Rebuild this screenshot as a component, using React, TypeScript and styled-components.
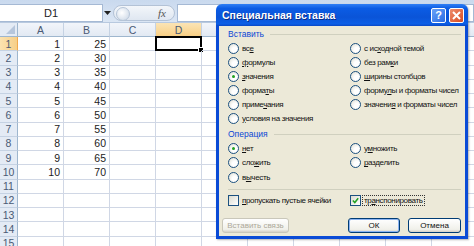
import { Fragment } from "react";
import styled, { createGlobalStyle } from "styled-components";

const GlobalStyle = createGlobalStyle`
  html, body {
    margin: 0;
    padding: 0;
    background: #ffffff;
  }
  body {
    width: 474px;
    height: 246px;
    overflow: hidden;
    font-family: "Liberation Sans", Arial, sans-serif;
  }
`;

const columns = ["A", "B", "C", "D", "E", "F", "G", "H", "I", "J"];
const rowCount = 15;

const values: Record<number, [number, number]> = {
  1: [1, 25],
  2: [2, 30],
  3: [3, 35],
  4: [4, 40],
  5: [5, 45],
  6: [6, 50],
  7: [7, 55],
  8: [8, 60],
  9: [9, 65],
  10: [10, 70],
};

interface RadioItem {
  before: string;
  key: string;
  after: string;
  checked?: boolean;
}

const pasteLeft: RadioItem[] = [
  { before: "вс", key: "е", after: "" },
  { before: "", key: "ф", after: "ормулы" },
  { before: "", key: "з", after: "начения", checked: true },
  { before: "форма", key: "т", after: "ы" },
  { before: "приме", key: "ч", after: "ания" },
  { before: "", key: "у", after: "словия на значения" },
];

const pasteRight: RadioItem[] = [
  { before: "с ис", key: "х", after: "одной темой" },
  { before: "без рам", key: "к", after: "и" },
  { before: "", key: "ш", after: "ирины столбцов" },
  { before: "форму", key: "л", after: "ы и форматы чисел" },
  { before: "значени", key: "я", after: " и форматы чисел" },
];

const opLeft: RadioItem[] = [
  { before: "", key: "н", after: "ет", checked: true },
  { before: "сло", key: "ж", after: "ить" },
  { before: "в", key: "ы", after: "честь" },
];

const opRight: RadioItem[] = [
  { before: "у", key: "м", after: "ножить" },
  { before: "", key: "р", after: "азделить" },
];

function App() {
  return (
    <>
      <GlobalStyle />
      <Page>
        <FormulaBar>
          <NameBox>D1</NameBox>
          <NameArrow>
            <svg width="7" height="4" viewBox="0 0 7 4">
              <path d="M0 0 H7 L3.5 4 Z" fill="#222" />
            </svg>
          </NameArrow>
          <FxPill>
            <PillKnob />
            <FxLabel>fx</FxLabel>
          </FxPill>
          <FormulaInput />
        </FormulaBar>

        <Sheet>
          <Corner>
            <svg width="9" height="9" viewBox="0 0 9 9">
              <path d="M9 0 V9 H0 Z" fill="#b6c6dc" />
            </svg>
          </Corner>
          {columns.map(c => (
            <ColHead key={c} $active={c === "D"}>
              {c}
            </ColHead>
          ))}
          {Array.from({ length: rowCount }, (_, i) => i + 1).map(r => (
            <Fragment key={r}>
              <RowHead $active={r === 1}>{r}</RowHead>
              {columns.map(c => {
                const v = values[r];
                let text = "";
                if (v && c === "A") text = String(v[0]);
                if (v && c === "B") text = String(v[1]);
                return (
                  <Cell key={c}>
                    {text}
                    {r === 1 && c === "D" && (
                      <Selection>
                        <Handle />
                      </Selection>
                    )}
                  </Cell>
                );
              })}
            </Fragment>
          ))}
        </Sheet>

        <Dialog>
          <TitleBar>
            <Title>Специальная вставка</Title>
            <TitleButtons>
              <TitleBtn $kind="help">?</TitleBtn>
              <TitleBtn $kind="close">
                <svg width="9" height="9" viewBox="0 0 9 9">
                  <path d="M1 1 L8 8 M8 1 L1 8" stroke="#fff" strokeWidth="2" />
                </svg>
              </TitleBtn>
            </TitleButtons>
          </TitleBar>
          <Body>
            <GroupHead>
              <GroupLabel>Вставить</GroupLabel>
              <GroupLine />
            </GroupHead>
            <Options>
              <Column>
                {pasteLeft.map(o => (
                  <Radio key={o.before + o.key} item={o} />
                ))}
              </Column>
              <Column>
                {pasteRight.map(o => (
                  <Radio key={o.before + o.key} item={o} />
                ))}
              </Column>
            </Options>

            <GroupHead $top={2}>
              <GroupLabel>Операция</GroupLabel>
              <GroupLine />
            </GroupHead>
            <Options $rowHeight={14.5}>
              <Column>
                {opLeft.map(o => (
                  <Radio key={o.before + o.key} item={o} />
                ))}
              </Column>
              <Column>
                {opRight.map(o => (
                  <Radio key={o.before + o.key} item={o} />
                ))}
              </Column>
            </Options>

            <Separator />

            <Options>
              <Column>
                <OptionRow>
                  <CheckBox />
                  <OptionText>
                    <u>п</u>ропускать пустые ячейки
                  </OptionText>
                </OptionRow>
              </Column>
              <Column>
                <OptionRow>
                  <CheckBox $checked>
                    <svg width="7" height="7" viewBox="0 0 7 7">
                      <path d="M0.8 3.5 L2.8 5.5 L6.2 1.2" stroke="#21a121" strokeWidth="1.5" fill="none" />
                    </svg>
                  </CheckBox>
                  <OptionText $focused>
                    тр<u>а</u>нспонировать
                  </OptionText>
                </OptionRow>
              </Column>
            </Options>

            <ButtonRow>
              <Button $disabled $width={67}>
                Вставить связь
              </Button>
              <ButtonGroup>
                <Button $default $width={52}>
                  ОК
                </Button>
                <Button $width={53}>Отмена</Button>
              </ButtonGroup>
            </ButtonRow>
          </Body>
        </Dialog>
      </Page>
    </>
  );
}

function Radio({ item }: { item: RadioItem }) {
  return (
    <OptionRow>
      <RadioCircle $checked={item.checked} />
      <OptionText>
        {item.before}
        <u>{item.key}</u>
        {item.after}
      </OptionText>
    </OptionRow>
  );
}

export default App;

const Page = styled.div`
  position: relative;
  width: 474px;
  height: 246px;
  overflow: hidden;
  background: #ffffff;
`;

const FormulaBar = styled.div`
  display: flex;
  align-items: stretch;
  height: 18px;
  padding-top: 4px;
  background: linear-gradient(#c9d9ee, #dbe6f4);
  border-bottom: 1px solid #b8c9df;
`;

const NameBox = styled.div`
  width: 103px;
  background: #ffffff;
  border: 1px solid #a5b9d4;
  border-left: none;
  font-size: 11px;
  color: #222;
  display: flex;
  align-items: center;
  justify-content: center;
  box-sizing: border-box;
`;

const NameArrow = styled.div`
  width: 9px;
  display: flex;
  align-items: center;
  justify-content: center;
`;

const FxPill = styled.div`
  position: relative;
  width: 62px;
  margin: 1px 2px 1px 1px;
  border-radius: 8px;
  background: linear-gradient(#f3f6fa, #dfe7f1);
  border: 1px solid #b3c2d6;
  display: flex;
  align-items: center;
  justify-content: flex-end;
  padding-right: 8px;
  box-sizing: border-box;
`;

const PillKnob = styled.div`
  position: absolute;
  left: 2px;
  top: 1px;
  width: 12px;
  height: 12px;
  border-radius: 50%;
  background: radial-gradient(circle at 40% 40%, #ffffff, #c7d4e4);
  border: 1px solid #b6c5d8;
`;

const FxLabel = styled.span`
  font-family: "Liberation Serif", "Times New Roman", serif;
  font-style: italic;
  font-size: 11px;
  color: #555;
`;

const FormulaInput = styled.div`
  flex: 1;
  background: #ffffff;
  border: 1px solid #a5b9d4;
`;

const Sheet = styled.div`
  display: grid;
  grid-template-columns: 18px repeat(10, 46px);
  grid-template-rows: 14px repeat(15, 14.25px);
  font-size: 10.5px;
  color: #222;
`;

const Corner = styled.div`
  background: #e4ebf5;
  border-right: 1px solid #9eb6ce;
  border-bottom: 1px solid #9eb6ce;
  display: flex;
  align-items: flex-end;
  justify-content: flex-end;
  padding: 0 2px 2px 0;
  box-sizing: border-box;
`;

const ColHead = styled.div<{ $active?: boolean }>`
  background: ${p => (p.$active ? "linear-gradient(#fbe4b5, #f8cf85)" : "linear-gradient(#f2f5fa, #e2e9f3)")};
  border-right: 1px solid #c5d2e3;
  border-bottom: 1px solid ${p => (p.$active ? "#f2a94d" : "#9eb6ce")};
  color: #4a5a74;
  display: flex;
  align-items: center;
  justify-content: center;
  box-sizing: border-box;
`;

const RowHead = styled.div<{ $active?: boolean }>`
  background: ${p => (p.$active ? "linear-gradient(90deg, #fbe2b0, #f7cf88)" : "#e4ebf5")};
  border-right: 1px solid ${p => (p.$active ? "#f2a94d" : "#9eb6ce")};
  border-bottom: 1px solid #c5d2e3;
  color: #4a5a74;
  display: flex;
  align-items: center;
  justify-content: center;
  box-sizing: border-box;
`;

const Cell = styled.div`
  position: relative;
  border-right: 1px solid #d0d7e5;
  border-bottom: 1px solid #d0d7e5;
  display: flex;
  align-items: center;
  justify-content: flex-end;
  padding-right: 3px;
  box-sizing: border-box;
`;

const Selection = styled.div`
  position: absolute;
  left: -1px;
  top: -1px;
  right: -1px;
  bottom: -1px;
  border: 2px solid #000;
`;

const Handle = styled.div`
  position: absolute;
  right: -4px;
  bottom: -4px;
  width: 4px;
  height: 4px;
  background: #000;
  border: 1px solid #fff;
`;

const Dialog = styled.div`
  position: absolute;
  left: 216px;
  top: 4px;
  width: 252px;
  height: 235px;
  display: flex;
  flex-direction: column;
  box-shadow: 1px 1px 2px rgba(0, 0, 0, 0.3);
  border-radius: 6px 6px 0 0;
`;

const TitleBar = styled.div`
  height: 22px;
  flex-shrink: 0;
  border-radius: 6px 6px 0 0;
  background: linear-gradient(#2f7ff5 0%, #0b5ce4 20%, #0a54d8 60%, #0c5fe6 90%, #0a48c5 100%);
  display: flex;
  align-items: center;
  justify-content: space-between;
  padding: 0 4px 0 6px;
`;

const Title = styled.span`
  color: #ffffff;
  font-weight: bold;
  font-size: 10.5px;
  text-shadow: 1px 1px 0 #0a2d88;
`;

const TitleButtons = styled.div`
  display: flex;
  gap: 3px;
`;

const TitleBtn = styled.div<{ $kind: "help" | "close" }>`
  width: 13px;
  height: 13px;
  border-radius: 2px;
  border: 1px solid #ffffff;
  background: ${p =>
    p.$kind === "close" ? "linear-gradient(135deg, #ee8e6f, #d84a20)" : "linear-gradient(135deg, #6aa2f8, #2a6ce4)"};
  color: #fff;
  font-weight: bold;
  font-size: 11px;
  display: flex;
  align-items: center;
  justify-content: center;
`;

const Body = styled.div`
  flex: 1;
  background: #ece9d8;
  border: 3px solid #0a4bd6;
  border-top: none;
  padding: 1px 4px 0 9px;
  display: flex;
  flex-direction: column;
`;

const GroupHead = styled.div<{ $top?: number }>`
  display: flex;
  align-items: center;
  gap: 6px;
  height: 14px;
  margin-top: ${p => p.$top ?? 0}px;
`;

const GroupLabel = styled.span`
  font-size: 8.5px;
  color: #0a46d5;
`;

const GroupLine = styled.div`
  flex: 1;
  height: 1px;
  background: #d0d0bf;
`;

const Options = styled.div<{ $rowHeight?: number }>`
  display: grid;
  grid-template-columns: 122px 1fr;
  --row-h: ${p => p.$rowHeight ?? 14}px;
`;

const Column = styled.div`
  display: flex;
  flex-direction: column;
`;

const OptionRow = styled.div`
  display: flex;
  align-items: center;
  height: var(--row-h, 14px);
  gap: 2px;
`;

const RadioCircle = styled.div<{ $checked?: boolean }>`
  width: 9px;
  height: 9px;
  border-radius: 50%;
  border: 1px solid #1c5180;
  background: radial-gradient(circle at 65% 65%, #ffffff 30%, #dcdcd0);
  display: flex;
  align-items: center;
  justify-content: center;
  flex-shrink: 0;
  &::after {
    content: "";
    display: ${p => (p.$checked ? "block" : "none")};
    width: 3px;
    height: 3px;
    border-radius: 50%;
    background: #21a121;
  }
`;

const CheckBox = styled.div<{ $checked?: boolean }>`
  width: 9px;
  height: 9px;
  border: 1px solid #1c5180;
  background: linear-gradient(135deg, #dcdcd0, #ffffff);
  display: flex;
  align-items: center;
  justify-content: center;
  flex-shrink: 0;
`;

const OptionText = styled.span<{ $focused?: boolean }>`
  font-size: 8px;
  letter-spacing: -0.35px;
  color: #111;
  white-space: nowrap;
  outline: ${p => (p.$focused ? "1px dotted #333" : "none")};
  outline-offset: 0;
  padding: 0 1px;
`;

const Separator = styled.div`
  height: 1px;
  background: #d0d0bf;
  margin: 4px 0 4px;
`;

const ButtonRow = styled.div`
  display: flex;
  justify-content: space-between;
  align-items: center;
  margin-top: 10px;
  margin-left: -6px;
`;

const ButtonGroup = styled.div`
  display: flex;
  gap: 8px;
`;

const Button = styled.div<{ $disabled?: boolean; $default?: boolean; $width: number }>`
  width: ${p => p.$width}px;
  height: 15px;
  box-sizing: border-box;
  border-radius: 3px;
  border: 1px solid ${p => (p.$disabled ? "#c9c7ba" : "#003c74")};
  background: linear-gradient(#ffffff, #f0f0ea 80%, #d6d0c5);
  box-shadow: ${p => (p.$default ? "inset 0 0 0 1px #8cb4f2" : "none")};
  font-size: 8px;
  white-space: nowrap;
  color: ${p => (p.$disabled ? "#aca899" : "#111")};
  display: flex;
  align-items: center;
  justify-content: center;
`;
